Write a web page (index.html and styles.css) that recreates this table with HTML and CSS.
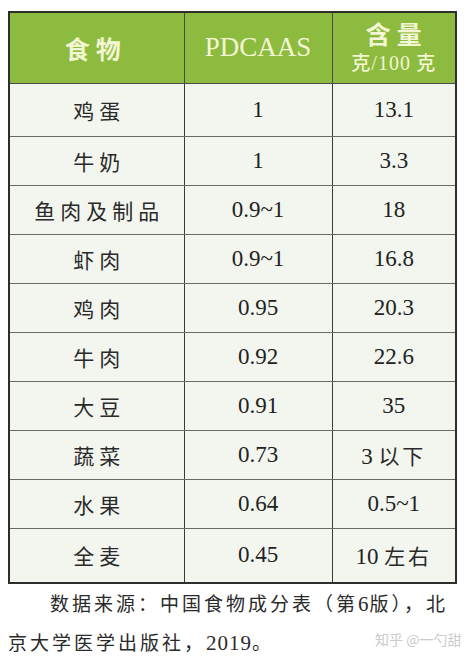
FILE: index.html
```html
<!DOCTYPE html>
<html lang="zh-CN">
<head>
<meta charset="utf-8">
<title>蛋白质</title>
<link rel="stylesheet" href="styles.css">
</head>
<body>
<div class="page">
  <table class="tbl">
    <colgroup>
      <col class="c1"><col class="c2"><col class="c3">
    </colgroup>
    <thead>
      <tr>
        <th class="h-cn">食物</th>
        <th class="h-en">PDCAAS</th>
        <th class="h-amt"><div class="h-top">含量</div><div class="h-sub">克<span class="num">/100</span> 克</div></th>
      </tr>
    </thead>
    <tbody>
      <tr class="first"><td class="cn">鸡蛋</td><td class="n">1</td><td class="n">13.1</td></tr>
      <tr><td class="cn">牛奶</td><td class="n">1</td><td class="n">3.3</td></tr>
      <tr><td class="cn">鱼肉及制品</td><td class="n">0.9~1</td><td class="n">18</td></tr>
      <tr><td class="cn">虾肉</td><td class="n">0.9~1</td><td class="n">16.8</td></tr>
      <tr><td class="cn">鸡肉</td><td class="n">0.95</td><td class="n">20.3</td></tr>
      <tr><td class="cn">牛肉</td><td class="n">0.92</td><td class="n">22.6</td></tr>
      <tr><td class="cn">大豆</td><td class="n">0.91</td><td class="n">35</td></tr>
      <tr><td class="cn">蔬菜</td><td class="n">0.73</td><td class="n">3 <span class="cjk">以下</span></td></tr>
      <tr><td class="cn">水果</td><td class="n">0.64</td><td class="n">0.5~1</td></tr>
      <tr class="last"><td class="cn">全麦</td><td class="n">0.45</td><td class="n">10 <span class="cjk">左右</span></td></tr>
    </tbody>
  </table>
  <p class="caption"><span class="l1">数据来源：中国食物成分表（第<span class="dg">6</span>版），北</span><br>京大学医学出版社，<span class="dg">2019</span>。</p>
  <div class="mark">知乎 @一勺甜</div>
</div>
</body>
</html>
```

FILE: styles.css
```css
html, body {
  margin: 0;
  padding: 0;
  background: #ffffff;
}
.page {
  position: relative;
  width: 474px;
  height: 660px;
  padding: 11px 0 0 8px;
  box-sizing: border-box;
}
.tbl {
  border-collapse: collapse;
  width: 447px;
  table-layout: fixed;
  border: 2px solid #2e2e2e;
  background: #f3f6ef;
  color: #222222;
}
.c1 { width: 175px; }
.c2 { width: 148px; }
.c3 { width: 124px; }
.tbl th, .tbl td {
  border: 1px solid #4a4a4a;
  text-align: center;
  vertical-align: middle;
  padding: 0;
}
.tbl thead tr {
  height: 71px;
  background: #8dbb3f;
}
.tbl th {
  color: #f2f6d2;
  font-weight: normal;
  border-top: 0;
}
.h-cn {
  font-family: "Noto Sans CJK SC", sans-serif;
  font-weight: 700 !important;
  font-size: 25px;
  letter-spacing: 6px;
  text-indent: 6px;
  padding-right: 8px !important;
}
.h-en {
  font-family: "Liberation Serif", "Times New Roman", serif;
  font-size: 27px;
}
.h-top {
  font-family: "Noto Sans CJK SC", sans-serif;
  font-weight: 700;
  font-size: 25px;
  letter-spacing: 6px;
  text-indent: 6px;
  line-height: 30px;
  margin-top: -3px;
}
.h-sub {
  font-family: "Noto Sans CJK SC", sans-serif;
  font-weight: 500;
  font-size: 19px;
  letter-spacing: 1px;
  line-height: 24px;
  margin-top: 2px;
}
.h-sub .num {
  font-family: "Liberation Serif", "Times New Roman", serif;
  font-weight: normal;
  font-size: 20px;
}
.tbl tbody tr { height: 49px; }
.tbl tbody tr.first { height: 53px; }
.tbl tbody tr.last { height: 55px; }
.tbl td {
  border-color: #6a6a6a #3a3a3a;
}
.tbl td.n {
  font-family: "Liberation Serif", "Times New Roman", serif;
  font-size: 23px;
}
.tbl td.cn {
  font-family: "Noto Sans CJK SC", sans-serif;
  font-size: 21px;
  letter-spacing: 5px;
  text-indent: 5px;
  color: #2a2a2a;
}
.cjk {
  font-family: "Noto Sans CJK SC", sans-serif;
  font-size: 21px;
  letter-spacing: 3px;
  color: #2a2a2a;
}
.caption {
  margin: 0;
  width: 450px;
  font-family: "Noto Sans CJK SC", sans-serif;
  font-size: 19px;
  line-height: 37px;
  letter-spacing: 3px;
  color: #2a2a2a;
}
.caption .dg {
  font-family: "Liberation Serif", "Times New Roman", serif;
  font-size: 21px;
  letter-spacing: 1px;
}
.l1 {
  padding-left: 42px;
}
.mark {
  position: absolute;
  left: 375px;
  top: 629px;
  font-family: "Noto Sans CJK SC", sans-serif;
  font-size: 14px;
  line-height: 20px;
  color: #cbcbcb;
  white-space: nowrap;
}
```
